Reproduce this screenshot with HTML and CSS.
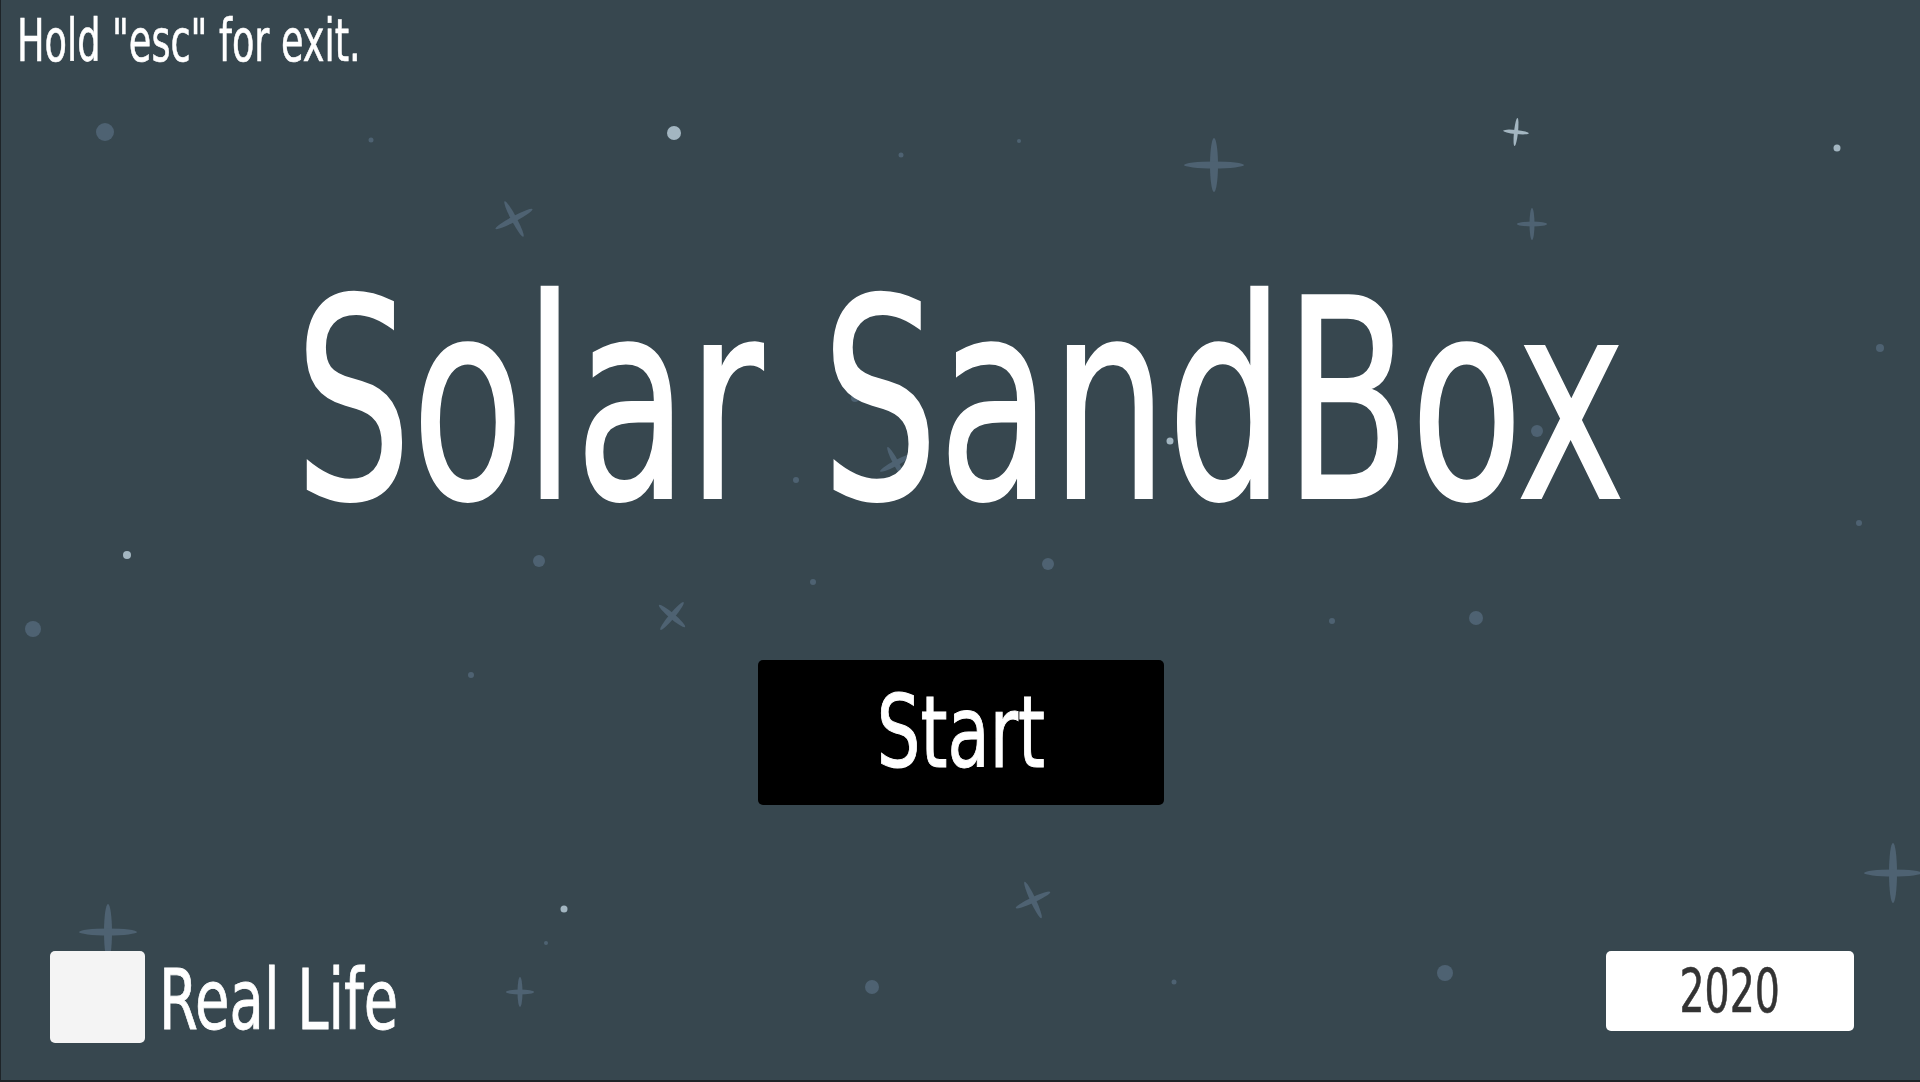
FILE: index.html
```html
<!DOCTYPE html>
<html lang="en">
<head>
    <meta charset="UTF-8">
    <meta name="viewport" content="width=device-width, initial-scale=1.0">
    <title>Solar SandBox</title>
    <link rel="stylesheet" href="styles.css">
</head>
<body>
    <div class="screen">
        <!-- star field behind the menu -->
        <svg class="sky" viewBox="0 0 1919 1080" preserveAspectRatio="none">
            <g class="dim">
                <circle cx="104" cy="132" r="9"/>
                <circle cx="370" cy="140" r="2.5"/>
                <circle cx="900" cy="155" r="2.5"/>
                <circle cx="1018" cy="141" r="2"/>
                <circle cx="1879" cy="348" r="4"/>
                <circle cx="1536" cy="431" r="6"/>
                <circle cx="854" cy="398" r="4"/>
                <circle cx="795" cy="480" r="3"/>
                <circle cx="538" cy="561" r="6"/>
                <circle cx="812" cy="582" r="3"/>
                <circle cx="1047" cy="564" r="6"/>
                <circle cx="32" cy="629" r="8"/>
                <circle cx="470" cy="675" r="3"/>
                <circle cx="1331" cy="621" r="3"/>
                <circle cx="1475" cy="618" r="7"/>
                <circle cx="1858" cy="523" r="3"/>
                <circle cx="871" cy="987" r="7"/>
                <circle cx="1173" cy="982" r="2.5"/>
                <circle cx="1444" cy="973" r="8"/>
                <circle cx="545" cy="943" r="2"/>

                <!-- sparkles: two crossed tapered arms -->
                <g transform="translate(1213 165)">
                    <ellipse rx="4" ry="27"/><ellipse rx="30" ry="3.5"/>
                </g>
                <g transform="translate(1531 224)">
                    <ellipse rx="2.5" ry="16"/><ellipse rx="15" ry="2.5"/>
                </g>
                <g transform="translate(513 219) rotate(-28)">
                    <ellipse rx="2.8" ry="20"/><ellipse rx="21" ry="2.8"/>
                </g>
                <g transform="translate(895 463) rotate(-28)">
                    <ellipse rx="2.8" ry="18"/><ellipse rx="18" ry="2.8"/>
                </g>
                <g transform="translate(671 616) rotate(40)">
                    <ellipse rx="2.8" ry="18"/><ellipse rx="17" ry="2.8"/>
                </g>
                <g transform="translate(1032 900) rotate(-25)">
                    <ellipse rx="2.8" ry="20"/><ellipse rx="19" ry="2.8"/>
                </g>
                <g transform="translate(1892 873)">
                    <ellipse rx="4" ry="30"/><ellipse rx="29" ry="3.5"/>
                </g>
                <g transform="translate(107 932)">
                    <ellipse rx="4" ry="28"/><ellipse rx="29" ry="3.5"/>
                </g>
                <g transform="translate(519 992)">
                    <ellipse rx="2.5" ry="15"/><ellipse rx="14" ry="2.5"/>
                </g>
            </g>
            <g class="bright">
                <circle cx="673" cy="133" r="7"/>
                <circle cx="1836" cy="148" r="3.5"/>
                <circle cx="1169" cy="441" r="3.5"/>
                <circle cx="126" cy="555" r="4"/>
                <circle cx="563" cy="909" r="3.5"/>
                <g transform="translate(1515 132) rotate(6)">
                    <ellipse rx="2" ry="14"/><ellipse rx="13" ry="2"/>
                </g>
            </g>
        </svg>

        <p class="hint"><span>Hold "esc" for exit.</span></p>

        <main class="menu">
            <h1 class="title"><span>Solar SandBox</span></h1>
            <button class="start"><span>Start</span></button>
        </main>

        <footer class="bottom">
            <label class="mode">
                <span class="box"></span>
                <span class="mode-name">Real Life</span>
            </label>
            <div class="year"><span>2020</span></div>
        </footer>
    </div>
</body>
</html>
```

FILE: styles.css
```css
body {
    margin: 0;
    padding: 0 0 0 1px;
    height: 1082px;
    background-color: #1e2428;
    font-family: "DejaVu Sans Condensed", "Liberation Sans", sans-serif;
    color: white;
    overflow: hidden;
}
.screen {
    position: relative;
    height: 1080px;
    background-color: #37474f;
    display: flex;
    flex-direction: column;
}
.sky {
    position: absolute;
    inset: 0;
    width: 100%;
    height: 100%;
}
.sky .dim {
    fill: #4e6272;
}
.sky .bright {
    fill: #a3b6c1;
}
.hint {
    position: relative;
    margin: 11px 0 0 16px;
    font-size: 59px;
    line-height: 1;
}
.hint span,
.title span,
.start span,
.mode-name,
.year span {
    display: inline-block;
}
.hint span {
    transform: scaleX(0.69);
    transform-origin: left;
    -webkit-text-stroke: 0.6px white;
}
.menu {
    position: relative;
    display: flex;
    flex-direction: column;
    align-items: center;
    padding-top: 193px;
}
.title {
    margin: 0;
    font-size: 278px;
    font-weight: normal;
    line-height: 1;
    white-space: nowrap;
}
.title span {
    transform: scaleX(0.735);
    -webkit-text-stroke: 2px white;
}
.start {
    margin-top: 119px;
    width: 406px;
    height: 145px;
    background-color: black;
    color: white;
    border: none;
    border-radius: 5px;
    font-family: inherit;
    font-size: 100px;
    line-height: 1;
    padding: 0;
    cursor: pointer;
}
.start span {
    transform: scaleX(0.765);
    -webkit-text-stroke: 1px white;
}
.bottom {
    position: relative;
    margin-top: auto;
    display: flex;
    justify-content: space-between;
    align-items: flex-start;
    padding: 0 66px 37px 49px;
}
.mode {
    display: flex;
    align-items: flex-start;
    gap: 14px;
    cursor: pointer;
}
.box {
    width: 95px;
    height: 92px;
    background-color: #f4f4f4;
    border-radius: 5px;
}
.mode-name {
    margin-top: 8px;
    font-size: 83px;
    line-height: 1;
    transform: scaleX(0.75);
    transform-origin: left;
    -webkit-text-stroke: 0.8px white;
}
.year {
    width: 248px;
    height: 80px;
    background-color: white;
    border-radius: 5px;
    color: #333;
    font-size: 60px;
    line-height: 1;
    display: flex;
    justify-content: center;
    align-items: center;
}
.year span {
    transform: scaleX(0.73);
    -webkit-text-stroke: 0.6px #333;
}
```
